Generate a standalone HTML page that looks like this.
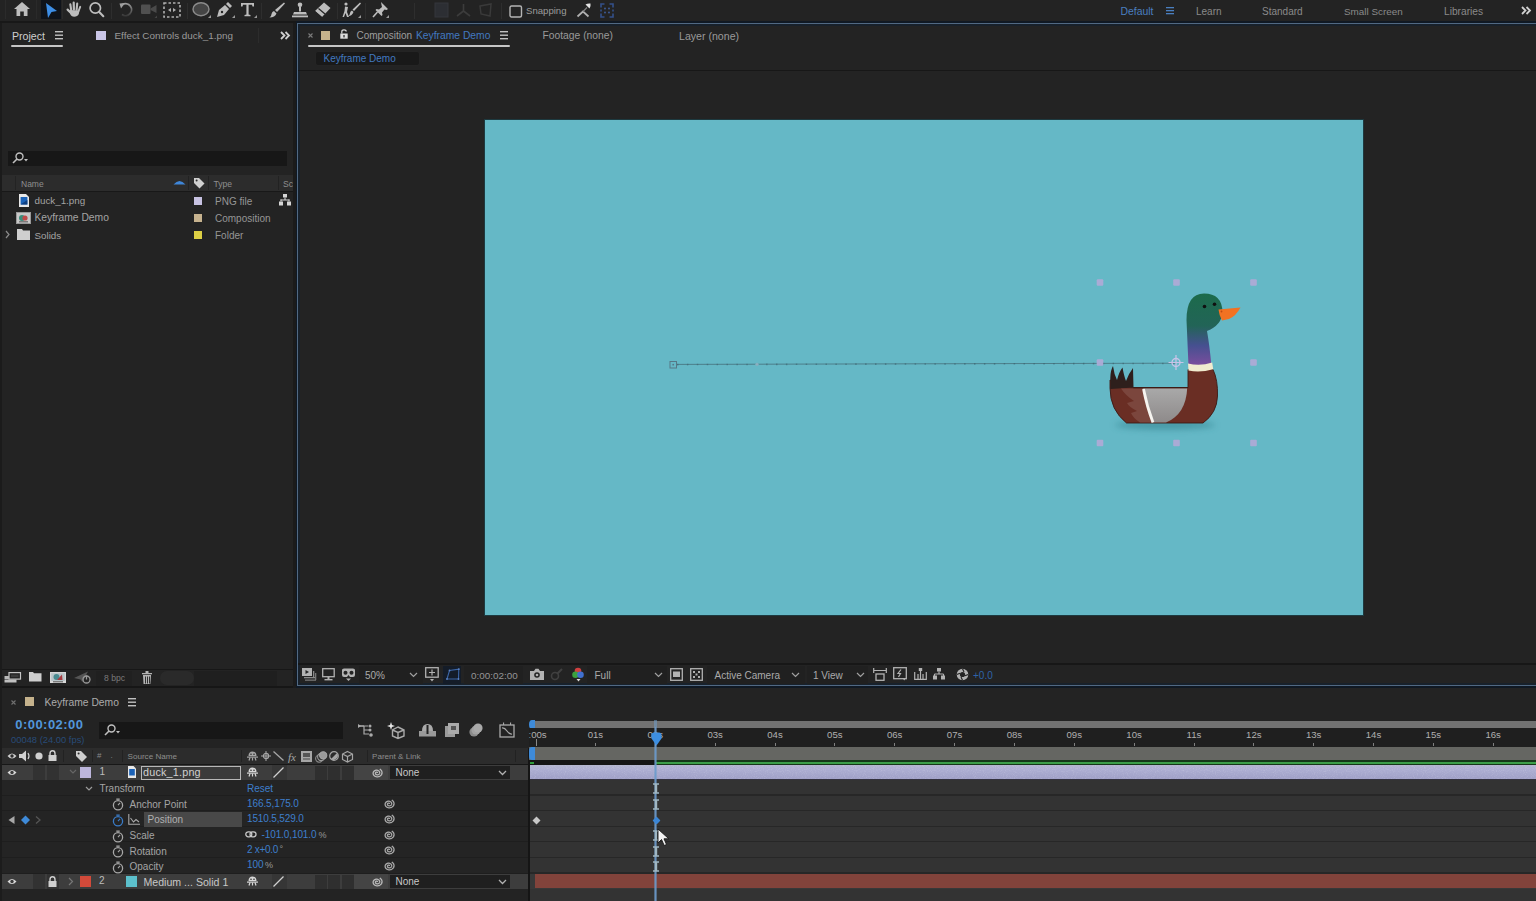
<!DOCTYPE html><html><head><meta charset="utf-8"><style>
html,body{margin:0;padding:0}
body{width:1536px;height:901px;background:#232323;position:relative;overflow:hidden;font-family:"Liberation Sans",sans-serif}
.a{position:absolute}
svg{overflow:visible}
.t{position:absolute;white-space:nowrap;height:14px;line-height:14px}
</style></head><body>
<div class="a" style="left:0px;top:0px;width:1536px;height:22px;background:#232323;"></div>
<div class="a" style="left:0px;top:21px;width:1536px;height:2px;background:#181818;"></div>
<div class="a" style="left:111px;top:3px;width:1px;height:16px;background:#2e2e2e;"></div>
<div class="a" style="left:187px;top:3px;width:1px;height:16px;background:#2e2e2e;"></div>
<div class="a" style="left:261px;top:3px;width:1px;height:16px;background:#2e2e2e;"></div>
<div class="a" style="left:337px;top:3px;width:1px;height:16px;background:#2e2e2e;"></div>
<div class="a" style="left:365px;top:3px;width:1px;height:16px;background:#2e2e2e;"></div>
<div class="a" style="left:414px;top:3px;width:1px;height:16px;background:#2e2e2e;"></div>
<div class="a" style="left:501px;top:3px;width:1px;height:16px;background:#2e2e2e;"></div>
<svg class="a" style="left:14px;top:2px;" width="16" height="14" viewBox="0 0 16 14"><path d="M8 0 L16 7 L13.5 7 L13.5 14 L9.8 14 L9.8 9.5 L6.2 9.5 L6.2 14 L2.5 14 L2.5 7 L0 7 Z" fill="#bdbdbd"/></svg>
<div class="a" style="left:41px;top:0px;width:19.5px;height:19px;background:#0f131a;"></div>
<div class="a" style="left:5px;top:0px;width:1.2px;height:19px;background:#2b2b2b;"></div>
<div class="a" style="left:36px;top:0px;width:1px;height:19px;background:#2a2a2a;"></div>
<div class="a" style="left:61.5px;top:0px;width:1px;height:19px;background:#2a2a2a;"></div>
<svg class="a" style="left:45px;top:3px;" width="13" height="15" viewBox="0 0 13 15"><path d="M1 0 L12 8 L6.5 9 L3 15 Z" fill="#3d8ee6"/></svg>
<svg class="a" style="left:66px;top:1px;" width="16" height="17" viewBox="0 0 16 17"><g stroke="#bdbdbd" stroke-linecap="round" fill="none"><path d="M5.2 9 L4.3 3.2" stroke-width="2.1"/><path d="M7.9 8.5 L7.7 1.6" stroke-width="2.2"/><path d="M10.6 8.8 L11.2 2.6" stroke-width="2.1"/><path d="M12.6 10 L14.2 5.8" stroke-width="1.9"/><path d="M5 12 L1.6 8.6" stroke-width="2.2"/></g><path d="M3.8 9 L13.5 9.5 L12.8 13 Q11.5 15.8 8.2 15.8 Q5.2 15.8 4 12.5 Z" fill="#bdbdbd"/></svg>
<svg class="a" style="left:88px;top:1px;" width="17" height="17" viewBox="0 0 17 17"><circle cx="7.3" cy="7" r="5.2" stroke="#bdbdbd" stroke-width="1.7" fill="none"/><path d="M11 10.8 L15.3 15.2" stroke="#bdbdbd" stroke-width="2.1" stroke-linecap="round"/></svg>
<svg class="a" style="left:118px;top:1px;" width="17" height="16" viewBox="0 0 17 16"><defs><linearGradient id="rg" x1="0" y1="0" x2="0" y2="1"><stop offset="0" stop-color="#9a9a9a"/><stop offset="1" stop-color="#3a3a3a"/></linearGradient></defs><path d="M4.5 3.5 A6 6 0 1 1 4 13.5" stroke="url(#rg)" stroke-width="1.8" fill="none"/><path d="M1.5 2.5 L7 2 L3 7.5 Z" fill="#a0a0a0"/></svg>
<svg class="a" style="left:141px;top:3px;" width="18" height="15" viewBox="0 0 18 15"><rect x="0" y="1.5" width="9.5" height="9.5" rx="1" fill="#505050"/><path d="M9.5 5.5 L15.5 2 L15.5 10 L9.5 7 Z" fill="#4a4a4a"/><path d="M16 15 L16 12.5 L13.5 15Z" fill="#444"/></svg>
<svg class="a" style="left:163px;top:2px;" width="18" height="16" viewBox="0 0 18 16"><rect x="1" y="1" width="16" height="14" stroke="#b0b0b0" stroke-width="1.6" fill="none" stroke-dasharray="2.5 2"/><path d="M5 8 L8 6 L8 10 Z M13 8 L10 6 L10 10 Z" fill="#b0b0b0"/></svg>
<svg class="a" style="left:192px;top:2px;" width="20" height="16" viewBox="0 0 20 16"><ellipse cx="9" cy="7.2" rx="8" ry="6.5" fill="#454545" stroke="#8c8c8c" stroke-width="1.4"/><path d="M19 16 L19 13 L16 16Z" fill="#9a9a9a"/></svg>
<svg class="a" style="left:216px;top:2px;" width="20" height="16" viewBox="0 0 20 16"><path d="M1 15 L3 8 L9 3 L13 7 L8 13 Z" fill="#bdbdbd"/><path d="M10 2 L12 0 L16 4 L14 6 Z" fill="#bdbdbd"/><circle cx="6" cy="10" r="1.2" fill="#232323"/><path d="M19 16 L19 13 L16 16Z" fill="#9a9a9a"/></svg>
<svg class="a" style="left:240px;top:2px;" width="18" height="16" viewBox="0 0 18 16"><path d="M1 1 L14 1 L14 4.5 L12.5 4.5 L12 2.8 L8.6 2.8 L8.6 12.5 L10.5 13 L10.5 14.3 L4.5 14.3 L4.5 13 L6.4 12.5 L6.4 2.8 L3 2.8 L2.5 4.5 L1 4.5 Z" fill="#bdbdbd"/><path d="M17 16 L17 13 L14 16Z" fill="#9a9a9a"/></svg>
<svg class="a" style="left:269px;top:2px;" width="16" height="16" viewBox="0 0 16 16"><path d="M15 0.5 L16 1.5 L8 10 L6 8 Z" fill="#bdbdbd"/><path d="M5 9 L7.5 11.5 Q6 15.5 0.5 15.5 Q2.5 14 2.5 12 Q3 9.5 5 9 Z" fill="#bdbdbd"/></svg>
<svg class="a" style="left:292px;top:2px;" width="16" height="16" viewBox="0 0 16 16"><circle cx="8" cy="2.8" r="2.3" fill="#bdbdbd"/><rect x="7" y="4.5" width="2" height="5" fill="#bdbdbd"/><path d="M2 10 L14 10 L15 12.5 L1 12.5 Z" fill="#bdbdbd"/><rect x="0" y="13.5" width="16" height="1.8" fill="#bdbdbd"/></svg>
<svg class="a" style="left:314px;top:2px;" width="17" height="16" viewBox="0 0 17 16"><path d="M10 0.5 L16.5 6 L8 15 L1 9 Z" fill="#bdbdbd"/><path d="M1 9 L8 15 L5.5 15.5 L0.5 11 Z" fill="#232323"/><path d="M4.5 6.5 L11 12" stroke="#232323" stroke-width="1.2"/></svg>
<svg class="a" style="left:342px;top:2px;" width="20" height="16" viewBox="0 0 20 16"><circle cx="4" cy="2" r="1.6" fill="#bdbdbd"/><path d="M3 4.5 L6 5 L5 10 L7 15 L5 15 L3.5 11 L2 15 L0.5 15 L2.5 9 Z" fill="#bdbdbd"/><path d="M18 0.5 L19 1.5 L12 9 L10.5 7.5 Z" fill="#bdbdbd"/><path d="M10 8.5 L11.5 10 Q10 14 6.5 14 Q8 12.5 8 11 Q8.3 9 10 8.5Z" fill="#bdbdbd"/><path d="M19 16 L19 13 L16 16Z" fill="#9a9a9a"/></svg>
<svg class="a" style="left:372px;top:2px;" width="18" height="16" viewBox="0 0 18 16"><path d="M9 0 L16 7 L14.5 8 L12.5 7.5 L10 10.5 L10.5 13 L9.5 14 L3.5 8 L4.5 7 L7 7.5 L10 5 L9.5 3 Z" fill="#bdbdbd"/><path d="M5.5 10 L1 15" stroke="#bdbdbd" stroke-width="1.6"/><path d="M17 16 L17 13 L14 16Z" fill="#9a9a9a"/></svg>
<svg class="a" style="left:434px;top:2px;" width="15" height="16" viewBox="0 0 15 16"><rect x="1" y="1" width="13" height="14" fill="#2c2e33" stroke="#34363c"/></svg>
<svg class="a" style="left:456px;top:3px;" width="15" height="14" viewBox="0 0 15 14"><path d="M7.5 1 L7.5 8 L1 13 M7.5 8 L14 13" stroke="#3c3c3c" stroke-width="1.6" fill="none"/></svg>
<svg class="a" style="left:479px;top:3px;" width="13" height="14" viewBox="0 0 13 14"><path d="M1 3 L12 1 L11 13 L2 11 Z" stroke="#3a3a3a" stroke-width="1.5" fill="none"/></svg>
<svg class="a" style="left:509px;top:5px;" width="14" height="13" viewBox="0 0 14 13"><rect x="1" y="1" width="11.5" height="11" rx="1.5" stroke="#b4b4b4" stroke-width="1.4" fill="none"/></svg>
<div class="t" style="left:526px;top:4.0px;font-size:9.6px;color:#9c9c9c;">Snapping</div>
<svg class="a" style="left:576px;top:2px;" width="16" height="16" viewBox="0 0 16 16"><path d="M1.5 14.5 L7 9.5 L12.5 14.5" stroke="#b0b0b0" stroke-width="1.7" fill="none"/><path d="M7 9.5 L11 5.5" stroke="#808080" stroke-width="1.3"/><path d="M9.5 2.5 Q12 1 14.5 1.5 Q15 4 13.5 6.5 Z" fill="#e4e4e4"/></svg>
<svg class="a" style="left:600px;top:3px;" width="14" height="15" viewBox="0 0 14 15"><path d="M1 4.5 L1 1 L4.5 1 M9.5 1 L13 1 L13 4.5 M13 10.5 L13 14 L9.5 14 M4.5 14 L1 14 L1 10.5" stroke="#34508a" stroke-width="1.6" fill="none"/><path d="M1 6.5 L1 8.5 M13 6.5 L13 8.5" stroke="#34508a" stroke-width="1.6"/><circle cx="5" cy="5.5" r="0.9" fill="#4060a0"/><circle cx="9" cy="5.5" r="0.9" fill="#4060a0"/><circle cx="5" cy="9.5" r="0.9" fill="#4060a0"/><circle cx="9" cy="9.5" r="0.9" fill="#4060a0"/></svg>
<div class="t" style="left:1120.5px;top:4.7px;font-size:10.4px;color:#4a7fc0;">Default</div>
<svg class="a" style="left:1166px;top:7px;" width="8" height="8" viewBox="0 0 8 8"><rect x="0" y="0" width="8" height="1.3" fill="#4a7fc0"/><rect x="0" y="3" width="8" height="1.3" fill="#4a7fc0"/><rect x="0" y="6" width="8" height="1.3" fill="#4a7fc0"/></svg>
<div class="t" style="left:1196px;top:4.7px;font-size:10px;color:#8a8a8a;">Learn</div>
<div class="t" style="left:1262px;top:4.7px;font-size:10px;color:#8a8a8a;">Standard</div>
<div class="t" style="left:1344px;top:4.7px;font-size:9.9px;color:#8a8a8a;">Small Screen</div>
<div class="t" style="left:1444px;top:4.7px;font-size:10.2px;color:#8a8a8a;">Libraries</div>
<svg class="a" style="left:1521px;top:6px;" width="10" height="10" viewBox="0 0 10 10"><path d="M1 1 L4.5 4.5 L1 8 M5.5 1 L9 4.5 L5.5 8" stroke="#d0d0d0" stroke-width="1.8" fill="none"/></svg>
<div class="a" style="left:0px;top:23px;width:295px;height:665px;background:#232323;"></div>
<div class="a" style="left:0px;top:23px;width:2px;height:665px;background:#1b1b1b;"></div>
<div class="t" style="left:12px;top:28.5px;font-size:10.6px;color:#cfcfcf;">Project</div>
<svg class="a" style="left:55px;top:31px;" width="8" height="9" viewBox="0 0 8 9"><rect x="0" y="0" width="8" height="1.4" fill="#c0c0c0"/><rect x="0" y="3.5" width="8" height="1.4" fill="#c0c0c0"/><rect x="0" y="7" width="8" height="1.4" fill="#c0c0c0"/></svg>
<div class="a" style="left:11px;top:44.5px;width:52px;height:2px;background:#c6c6c6;border-radius:1px"></div>
<div class="a" style="left:96px;top:31px;width:9.5px;height:9px;background:#c9c5e6;"></div>
<div class="t" style="left:114.5px;top:28.5px;font-size:9.9px;color:#9a9a9a;">Effect Controls duck_1.png</div>
<div class="a" style="left:258px;top:28px;width:1px;height:15px;background:#2c2c2c;"></div>
<svg class="a" style="left:280px;top:31px;" width="11" height="10" viewBox="0 0 11 10"><path d="M1 1 L4.5 4.5 L1 8 M5.5 1 L9 4.5 L5.5 8" stroke="#d0d0d0" stroke-width="1.8" fill="none"/></svg>
<div class="a" style="left:8px;top:151px;width:279px;height:15px;background:#171717;"></div>
<svg class="a" style="left:12px;top:152px;" width="18" height="12" viewBox="0 0 18 12"><circle cx="7.5" cy="4.5" r="3.5" stroke="#c0c0c0" stroke-width="1.4" fill="none"/><path d="M5 7 L1 11" stroke="#c0c0c0" stroke-width="1.6"/><path d="M12 7 L16 7 L14 9.5Z" fill="#c0c0c0"/></svg>
<div class="a" style="left:2px;top:175px;width:292px;height:16px;background:#2c2c2c;"></div>
<div class="a" style="left:2px;top:191px;width:292px;height:1px;background:#181818;"></div>
<div class="a" style="left:15px;top:176px;width:1px;height:14px;background:#232323;"></div>
<div class="t" style="left:21px;top:176.8px;font-size:8.5px;color:#8e8e8e;">Name</div>
<svg class="a" style="left:173px;top:179px;" width="13" height="6" viewBox="0 0 13 6"><path d="M0.5 5.5 Q6.5 -1.5 12.5 5.5 Z" fill="#3f86d8"/></svg>
<div class="a" style="left:188px;top:176px;width:1px;height:14px;background:#222;"></div>
<svg class="a" style="left:193px;top:177px;" width="12" height="13" viewBox="0 0 12 13"><path d="M1 1 L6 1 L11.5 6.5 L6.5 11.5 L1 6 Z" fill="#cfcfcf"/><circle cx="3.6" cy="3.6" r="1" fill="#2c2c2c"/></svg>
<div class="a" style="left:208px;top:176px;width:1px;height:14px;background:#222;"></div>
<div class="t" style="left:213.5px;top:177.0px;font-size:8.6px;color:#8e8e8e;">Type</div>
<div class="a" style="left:278px;top:176px;width:1px;height:14px;background:#222;"></div>
<div class="t" style="left:283px;top:177.0px;font-size:8.6px;color:#8e8e8e;">Sc</div>
<div class="t" style="left:34.5px;top:194.0px;font-size:9.8px;color:#a3a3a3;">duck_1.png</div>
<div class="a" style="left:193.5px;top:196.7px;width:8.5px;height:8.3px;background:#c7c2e2;"></div>
<div class="t" style="left:215px;top:194.8px;font-size:10px;color:#969696;">PNG file</div>
<div class="t" style="left:34.5px;top:211.0px;font-size:10.3px;color:#a3a3a3;">Keyframe Demo</div>
<div class="a" style="left:193.5px;top:213.7px;width:8.5px;height:8.3px;background:#c6b28e;"></div>
<div class="t" style="left:215px;top:211.8px;font-size:10px;color:#969696;">Composition</div>
<div class="t" style="left:34.5px;top:228.5px;font-size:9.8px;color:#a3a3a3;">Solids</div>
<div class="a" style="left:193.5px;top:231.2px;width:8.5px;height:8.3px;background:#dccf44;"></div>
<div class="t" style="left:215px;top:229.3px;font-size:10px;color:#969696;">Folder</div>
<svg class="a" style="left:19px;top:194px;" width="10" height="13" viewBox="0 0 10 13"><path d="M0 0 L7 0 L10 3 L10 13 L0 13 Z" fill="#e8e8e8"/><rect x="1.6" y="3" width="6.8" height="7.5" fill="#1a62b8"/><path d="M1.6 10.5 L8.4 6 L8.4 10.5Z" fill="#0f3f80"/></svg>
<svg class="a" style="left:16px;top:212px;" width="15" height="12" viewBox="0 0 15 12"><rect x="0" y="0" width="15" height="12" fill="#9a9a9a"/><rect x="1" y="1" width="13" height="10" fill="#c8c8c8"/><circle cx="6" cy="6" r="3" fill="#3a8c7a"/><circle cx="9" cy="6" r="2.6" fill="#c04848"/><rect x="3" y="9" width="9" height="1.5" fill="#7a7a7a"/></svg>
<svg class="a" style="left:5px;top:230px;" width="5" height="9" viewBox="0 0 5 9"><path d="M1 1 L4 4.5 L1 8" stroke="#8a8a8a" stroke-width="1.2" fill="none"/></svg>
<svg class="a" style="left:17px;top:229px;" width="13" height="11" viewBox="0 0 13 11"><path d="M0 0 L5 0 L6 1.5 L13 1.5 L13 11 L0 11 Z" fill="#cfcfcf"/></svg>
<svg class="a" style="left:279px;top:194px;" width="12" height="12" viewBox="0 0 12 12"><rect x="4" y="0" width="4" height="3.5" fill="#d6d6d6"/><rect x="5.5" y="3.5" width="1" height="2.5" fill="#d6d6d6"/><rect x="1.5" y="5.5" width="9" height="1" fill="#d6d6d6"/><rect x="1.5" y="5.5" width="1" height="2" fill="#d6d6d6"/><rect x="9.5" y="5.5" width="1" height="2" fill="#d6d6d6"/><rect x="0" y="7.5" width="4" height="4" fill="#d6d6d6"/><rect x="8" y="7.5" width="4" height="4" fill="#d6d6d6"/></svg>
<div class="a" style="left:2px;top:669px;width:293px;height:1px;background:#171717;"></div>
<div class="a" style="left:2px;top:670px;width:293px;height:16px;background:#232323;"></div>
<div class="a" style="left:2px;top:686px;width:293px;height:2px;background:#161616;"></div>
<svg class="a" style="left:4px;top:672px;" width="17" height="11" viewBox="0 0 17 11"><rect x="5" y="0.6" width="11.5" height="6.5" fill="none" stroke="#c4c4c4" stroke-width="1.2"/><rect x="7" y="2.6" width="7.5" height="2.5" fill="#3a3a3a"/><rect x="0.5" y="4" width="4.5" height="3" fill="#b8b8b8"/><rect x="0.5" y="7.5" width="12" height="3" fill="#c0c0c0"/></svg>
<svg class="a" style="left:29px;top:672px;" width="13" height="10" viewBox="0 0 13 10"><path d="M0 0 L4 0 L5 1.2 L12.5 1.2 L12.5 9.5 L0 9.5 Z" fill="#cfcfcf"/></svg>
<svg class="a" style="left:50px;top:672px;" width="16" height="11" viewBox="0 0 16 11"><rect x="0" y="0" width="16" height="11" fill="#d8d8d8"/><rect x="1.2" y="1.2" width="13.6" height="7.8" fill="#b8c4c8"/><circle cx="6.5" cy="5" r="3" fill="#4a8a90"/><path d="M7 8 L12 2.5 L12.5 8 Z" fill="#a83a40"/><rect x="3" y="9.3" width="10" height="1" fill="#555"/></svg>
<svg class="a" style="left:74px;top:671px;" width="17" height="13" viewBox="0 0 17 13"><path d="M0 7 L14 0.5 L8.5 11 L6.5 8.5 Z" fill="#555"/><circle cx="12.5" cy="8.5" r="3.5" fill="none" stroke="#9a9a9a" stroke-width="1.3"/><path d="M12.5 4.5 L12.5 8.5" stroke="#9a9a9a" stroke-width="1.3"/></svg>
<div class="a" style="left:96px;top:670.5px;width:36px;height:15px;background:#202020;"></div>
<div class="t" style="left:104px;top:671.0px;font-size:8.6px;color:#7a7a7a;">8 bpc</div>
<svg class="a" style="left:142px;top:671px;" width="10" height="13" viewBox="0 0 10 13"><rect x="0" y="2" width="10" height="1.3" fill="#b4b4b4"/><rect x="3.5" y="0" width="3" height="2" fill="#b4b4b4"/><path d="M1 4 L9 4 L8.4 13 L1.6 13 Z" fill="#b4b4b4"/><path d="M3.5 5.5 L3.5 12.5 M5.5 5.5 L5.5 12.5 M7.5 5.5 L7.5 12.5" stroke="#232323" stroke-width="0.9"/></svg>
<div class="a" style="left:160px;top:671px;width:34px;height:14px;background:#2a2a2a;border-radius:7px"></div>
<div class="a" style="left:194px;top:670.5px;width:83px;height:15px;background:#1f1f1f;"></div>
<div class="a" style="left:293px;top:23px;width:3px;height:665px;background:#1b1b1b;"></div>
<div class="a" style="left:295.5px;top:20.5px;width:1240.5px;height:668px;background:#101924;"></div>
<div class="a" style="left:297px;top:22.8px;width:1239px;height:663.2px;background:#516983;"></div>
<div class="a" style="left:298.2px;top:24.1px;width:1237.8px;height:660.6px;background:#18212b;"></div>
<div class="a" style="left:300px;top:26px;width:1236px;height:657px;background:#232323;"></div>
<svg class="a" style="left:307.5px;top:33px;" width="5" height="5" viewBox="0 0 5 5"><path d="M0.5 0.5 L4.5 4.5 M4.5 0.5 L0.5 4.5" stroke="#7c7c7c" stroke-width="1.1"/></svg>
<div class="a" style="left:320.5px;top:30.5px;width:9.5px;height:9.5px;background:#c5b28c;"></div>
<svg class="a" style="left:340px;top:29px;" width="8" height="10" viewBox="0 0 8 10"><path d="M1.8 4.5 L1.8 2.8 Q1.8 0.8 4 0.8 Q6.2 0.8 6.2 2.4" stroke="#dcdcdc" stroke-width="1.2" fill="none"/><rect x="0.3" y="4.5" width="7.4" height="5.2" fill="#dcdcdc"/><rect x="3.4" y="6" width="1.2" height="2.4" fill="#232323"/></svg>
<div class="t" style="left:356.5px;top:28.5px;font-size:10px;color:#9e9e9e;">Composition</div>
<div class="t" style="left:416px;top:28.5px;font-size:10.3px;color:#4279c0;">Keyframe Demo</div>
<svg class="a" style="left:500px;top:31px;" width="8" height="9" viewBox="0 0 8 9"><rect x="0" y="0" width="8" height="1.4" fill="#c0c0c0"/><rect x="0" y="3.5" width="8" height="1.4" fill="#c0c0c0"/><rect x="0" y="7" width="8" height="1.4" fill="#c0c0c0"/></svg>
<div class="a" style="left:307.5px;top:44.5px;width:202px;height:2px;background:#c6c6c6;border-radius:1px"></div>
<div class="t" style="left:542.5px;top:28.5px;font-size:10.3px;color:#9a9a9a;">Footage (none)</div>
<div class="t" style="left:679px;top:28.5px;font-size:10.6px;color:#9a9a9a;">Layer (none)</div>
<div class="a" style="left:316px;top:51.5px;width:103px;height:13.5px;background:#191919;border-radius:2px;box-shadow:0 0 0 0.6px #262626"></div>
<div class="t" style="left:323.5px;top:51.7px;font-size:10px;color:#4279c0;">Keyframe Demo</div>
<div class="a" style="left:298px;top:69.5px;width:1238px;height:1.5px;background:#171717;"></div>
<div class="a" style="left:484px;top:119px;width:880px;height:496.5px;background:#1d3a40;"></div>
<div class="a" style="left:485px;top:120px;width:878px;height:494.5px;background:#65b8c6;"></div>
<div class="a" style="left:298px;top:663px;width:1238px;height:1.5px;background:#171717;"></div>
<div class="a" style="left:0px;top:688px;width:1536px;height:213px;background:#232323;"></div>
<div class="a" style="left:0px;top:688px;width:2px;height:213px;background:#1c1c1c;"></div>
<svg class="a" style="left:10.5px;top:700px;" width="5" height="5" viewBox="0 0 5 5"><path d="M0.5 0.5 L4.5 4.5 M4.5 0.5 L0.5 4.5" stroke="#707070" stroke-width="1.1"/></svg>
<div class="a" style="left:24.5px;top:696.5px;width:9.5px;height:9.5px;background:#c5b28c;"></div>
<div class="t" style="left:44.5px;top:695.8px;font-size:10.3px;color:#ababab;">Keyframe Demo</div>
<svg class="a" style="left:128px;top:698px;" width="9" height="9" viewBox="0 0 9 9"><rect x="0" y="0" width="8" height="1.4" fill="#c0c0c0"/><rect x="0" y="3.5" width="8" height="1.4" fill="#c0c0c0"/><rect x="0" y="7" width="8" height="1.4" fill="#c0c0c0"/></svg>
<div class="t" style="left:15.3px;top:718.3px;font-size:13px;color:#5296da;font-weight:bold;letter-spacing:0.45px">0:00:02:00</div>
<div class="t" style="left:11px;top:732.8px;font-size:9.4px;color:#284b78;">00048 (24.00 fps)</div>
<div class="a" style="left:99px;top:721.5px;width:244px;height:17px;background:#171717;"></div>
<svg class="a" style="left:104px;top:724px;" width="18" height="12" viewBox="0 0 18 12"><circle cx="7.5" cy="4.5" r="3.5" stroke="#c0c0c0" stroke-width="1.4" fill="none"/><path d="M5 7 L1 11" stroke="#c0c0c0" stroke-width="1.6"/><path d="M12 7 L16 7 L14 9.5Z" fill="#c0c0c0"/></svg>
<div class="a" style="left:2px;top:748px;width:527px;height:16px;background:#2c2c2c;"></div>
<div class="a" style="left:2px;top:764px;width:527px;height:1px;background:#171717;"></div>
<svg class="a" style="left:7px;top:752px;" width="10" height="8" viewBox="0 0 10 8"><path d="M0.5 4 Q5 -1 9.5 4 Q5 9 0.5 4 Z" fill="#cfcfcf"/><circle cx="5" cy="4" r="1.7" fill="#2c2c2c"/></svg>
<svg class="a" style="left:19px;top:750px;" width="12" height="12" viewBox="0 0 12 12"><path d="M0 4 L3 4 L7 0.5 L7 11.5 L3 8 L0 8 Z" fill="#cfcfcf"/><path d="M9 3 Q11 6 9 9" stroke="#cfcfcf" stroke-width="1.2" fill="none"/></svg>
<svg class="a" style="left:35px;top:752px;" width="8" height="8" viewBox="0 0 8 8"><circle cx="4" cy="4" r="3.6" fill="#cfcfcf"/></svg>
<svg class="a" style="left:48px;top:750px;" width="9" height="11" viewBox="0 0 9 11"><path d="M2 5 L2 3.5 Q2 0.8 4.5 0.8 Q7 0.8 7 3.5 L7 5" stroke="#d0d0d0" stroke-width="1.4" fill="none"/><rect x="0.5" y="5" width="8" height="6" fill="#d0d0d0"/></svg>
<div class="a" style="left:63px;top:750px;width:1px;height:12px;background:#222;"></div>
<svg class="a" style="left:75px;top:750px;" width="13" height="13" viewBox="0 0 13 13"><path d="M1 1 L6 1 L12 7 L7 12 L1 6 Z" fill="#cfcfcf"/><circle cx="3.6" cy="3.6" r="1" fill="#2c2c2c"/></svg>
<div class="a" style="left:92px;top:750px;width:1px;height:12px;background:#222;"></div>
<div class="t" style="left:97px;top:749.0px;font-size:8px;color:#8a8a8a;">#</div>
<div class="t" style="left:110.5px;top:749.0px;font-size:8px;color:#8a8a8a;">.</div>
<div class="a" style="left:122px;top:750px;width:1px;height:12px;background:#222;"></div>
<div class="t" style="left:127.5px;top:749.8px;font-size:8.1px;color:#8e8e8e;">Source Name</div>
<div class="a" style="left:241px;top:750px;width:1px;height:12px;background:#222;"></div>
<svg class="a" style="left:247px;top:751px;" width="11" height="10" viewBox="0 0 11 10"><path d="M1.5 5 Q1.5 0.5 5.5 0.5 Q9.5 0.5 9.5 5 Z" fill="#a6a6a6"/><rect x="0" y="5.5" width="11" height="1.2" fill="#a6a6a6"/><path d="M3 6.5 L2 9.5 M8 6.5 L9 9.5 M5.5 6.5 L5.5 9.5" stroke="#a6a6a6" stroke-width="1.2"/><circle cx="4" cy="3.2" r="0.8" fill="#2c2c2c"/><circle cx="7" cy="3.2" r="0.8" fill="#2c2c2c"/></svg>
<svg class="a" style="left:261px;top:751px;" width="10" height="10" viewBox="0 0 10 10"><circle cx="5" cy="5" r="2.6" stroke="#a6a6a6" stroke-width="1.2" fill="none"/><path d="M5 0 L5 10 M0 5 L10 5" stroke="#a6a6a6" stroke-width="1"/></svg>
<svg class="a" style="left:273px;top:751px;" width="11" height="10" viewBox="0 0 11 10"><path d="M0.5 0.5 L10.5 9.5" stroke="#a6a6a6" stroke-width="1.3"/></svg>
<div class="t" style="left:288px;top:749.5px;font-size:11px;color:#a6a6a6;font-family:'Liberation Serif',serif"><i>fx</i></div>
<svg class="a" style="left:300.5px;top:750.5px;" width="11" height="11" viewBox="0 0 11 11"><rect x="0" y="0" width="11" height="11" fill="#a6a6a6"/><rect x="2" y="2" width="7" height="4" fill="#555"/><rect x="2" y="7" width="7" height="2" fill="#777"/></svg>
<svg class="a" style="left:314.5px;top:750.5px;" width="12" height="12" viewBox="0 0 12 12"><circle cx="4.2" cy="7.6" r="3.6" fill="#2c2c2c" stroke="#8a8a8a" stroke-width="1.1"/><circle cx="6.2" cy="6" r="3.6" fill="#2c2c2c" stroke="#9a9a9a" stroke-width="1.1"/><circle cx="8.2" cy="4.4" r="3.6" fill="#9a9a9a" stroke="#a6a6a6" stroke-width="1.1"/></svg>
<svg class="a" style="left:329px;top:751px;" width="10" height="10" viewBox="0 0 10 10"><circle cx="5" cy="5" r="4.3" fill="#2c2c2c" stroke="#a6a6a6" stroke-width="1.2"/><path d="M8 2 A4.3 4.3 0 0 1 2 8 Z" fill="#a6a6a6"/></svg>
<svg class="a" style="left:342px;top:750.5px;" width="11" height="11" viewBox="0 0 11 11"><path d="M5.5 0.5 L10.5 3 L10.5 8.5 L5.5 11 L0.5 8.5 L0.5 3 Z M0.5 3 L5.5 5.5 L10.5 3 M5.5 5.5 L5.5 11" stroke="#a6a6a6" stroke-width="1.2" fill="none"/></svg>
<div class="a" style="left:367px;top:750px;width:1px;height:12px;background:#222;"></div>
<div class="t" style="left:372px;top:750.0px;font-size:8.1px;color:#8e8e8e;">Parent &amp; Link</div>
<div class="a" style="left:514.5px;top:750px;width:1px;height:12px;background:#222;"></div>
<svg class="a" style="left:358px;top:723px;" width="17" height="15" viewBox="0 0 17 15"><path d="M0 3 L6 3" stroke="#aaaaaa" stroke-width="1.6"/><path d="M0 1 L3 3 L0 5Z" fill="#aaaaaa"/><path d="M6 3 L6 11 L11 11 M6 7 L11 7 M6 3 L10 3" stroke="#aaaaaa" stroke-width="1.2" fill="none"/><circle cx="12" cy="3" r="1.5" fill="#aaaaaa"/><circle cx="12" cy="7" r="1.5" fill="#aaaaaa"/><circle cx="13" cy="12" r="1.8" fill="#aaaaaa"/></svg>
<svg class="a" style="left:388px;top:722px;" width="17" height="16" viewBox="0 0 17 16"><path d="M3 0 L4 3 L7 4 L4 5 L3 8 L2 5 L-1 4 L2 3 Z" fill="#e8e8e8"/><path d="M10 5 L16 8 L16 14 L10 16.5 L4.5 14 L4.5 8 Z M4.5 8 L10 10.5 L16 8 M10 10.5 L10 16.5" stroke="#aaaaaa" stroke-width="1.4" fill="none"/></svg>
<svg class="a" style="left:419px;top:723px;" width="17" height="14" viewBox="0 0 17 14"><path d="M3 8 Q3 1 8.5 1 Q14 1 14 8 Z" fill="#aaaaaa"/><rect x="0" y="8" width="17" height="5.5" fill="#9a9a9a"/><rect x="7.5" y="2" width="2" height="9" fill="#232323"/></svg>
<svg class="a" style="left:445px;top:723px;" width="14" height="14" viewBox="0 0 14 14"><rect x="0" y="3" width="10" height="11" fill="#9a9a9a"/><rect x="3" y="0" width="11" height="11" fill="#aaaaaa"/><rect x="6" y="3" width="5" height="4" fill="#555"/></svg>
<svg class="a" style="left:469px;top:723px;" width="14" height="14" viewBox="0 0 14 14"><circle cx="5" cy="9" r="4.6" fill="#8a8a8a"/><circle cx="7" cy="7" r="4.6" fill="#a2a2a2"/><circle cx="9" cy="5" r="4.6" fill="#aaaaaa"/></svg>
<svg class="a" style="left:499px;top:722px;" width="16" height="16" viewBox="0 0 16 16"><rect x="1" y="3" width="14" height="12" stroke="#aaaaaa" stroke-width="1.3" fill="none"/><path d="M3 6 Q5.5 5.5 8 9 Q10.5 12.5 13 12" stroke="#aaaaaa" stroke-width="1.2" fill="none"/><rect x="4" y="0.5" width="1.1" height="2.5" fill="#aaaaaa"/><rect x="11" y="0.5" width="1.1" height="2.5" fill="#aaaaaa"/></svg>
<div class="a" style="left:2px;top:765px;width:527px;height:15px;background:#3d3d3d;"></div>
<div class="a" style="left:354px;top:765px;width:34px;height:15px;background:#444444;"></div>
<div class="a" style="left:272px;top:765px;width:15px;height:15px;background:#363636;"></div>
<div class="a" style="left:33px;top:765px;width:12px;height:15px;background:#323232;"></div>
<div class="a" style="left:46.5px;top:765px;width:12px;height:15px;background:#323232;"></div>
<svg class="a" style="left:7px;top:768.5px;" width="10" height="7" viewBox="0 0 10 7"><path d="M0.5 3.5 Q5 -1.5 9.5 3.5 Q5 8.5 0.5 3.5 Z" fill="#d8d8d8"/><circle cx="5" cy="3.5" r="1.7" fill="#3b3b3b"/></svg>
<svg class="a" style="left:69px;top:769px;" width="8" height="6" viewBox="0 0 8 6"><path d="M1 1 L4 4 L7 1" stroke="#666" stroke-width="1.2" fill="none"/></svg>
<div class="a" style="left:80px;top:767px;width:10.5px;height:11px;background:#bdb6dc;"></div>
<div class="t" style="left:99.5px;top:765.0px;font-size:10px;color:#bcbcbc;">1</div>
<svg class="a" style="left:128px;top:766px;" width="8" height="12" viewBox="0 0 8 12"><path d="M0 0 L5.5 0 L8 2.5 L8 12 L0 12 Z" fill="#e8e8e8"/><rect x="1.2" y="3" width="5.6" height="6.5" fill="#1a62b8"/></svg>
<div class="a" style="left:140.5px;top:765.5px;width:100.5px;height:14px;background:#3b3b3b;box-sizing:border-box;border:1.2px solid #b8b8b8"></div>
<div class="t" style="left:143px;top:765.0px;font-size:10.8px;color:#d0d0d0;letter-spacing:0.2px">duck_1.png</div>
<svg class="a" style="left:247px;top:767px;" width="11" height="10" viewBox="0 0 11 10"><path d="M1.5 5 Q1.5 0.5 5.5 0.5 Q9.5 0.5 9.5 5 Z" fill="#d8d8d8"/><rect x="0" y="5.5" width="11" height="1.2" fill="#d8d8d8"/><path d="M3 6.5 L2 9.5 M8 6.5 L9 9.5 M5.5 6.5 L5.5 9.5" stroke="#d8d8d8" stroke-width="1.2"/><circle cx="4" cy="3.2" r="0.8" fill="#2c2c2c"/><circle cx="7" cy="3.2" r="0.8" fill="#2c2c2c"/></svg>
<svg class="a" style="left:273px;top:767px;" width="11" height="11" viewBox="0 0 11 11"><path d="M0.5 10.5 L10.5 0.5" stroke="#d0d0d0" stroke-width="1.3"/></svg>
<div class="a" style="left:314.7px;top:765.5px;width:12px;height:14px;background:#2f2f2f;"></div>
<div class="a" style="left:328px;top:765.5px;width:12px;height:14px;background:#2f2f2f;"></div>
<div class="a" style="left:342.3px;top:765.5px;width:12px;height:14px;background:#2f2f2f;"></div>
<svg class="a" style="left:371px;top:766.5px;" width="12" height="12" viewBox="0 0 12 12"><path d="M6.47 5.83 L6.48 5.73 L6.47 5.63 L6.43 5.53 L6.37 5.43 L6.27 5.34 L6.15 5.26 L6.01 5.19 L5.84 5.15 L5.66 5.14 L5.47 5.15 L5.28 5.19 L5.09 5.27 L4.91 5.38 L4.75 5.52 L4.62 5.69 L4.51 5.88 L4.45 6.09 L4.43 6.32 L4.46 6.56 L4.53 6.80 L4.66 7.03 L4.84 7.24 L5.06 7.43 L5.33 7.59 L5.63 7.72 L5.97 7.80 L6.32 7.83 L6.69 7.81 L7.05 7.74 L7.41 7.61 L7.74 7.42 L8.04 7.19 L8.30 6.91 L8.50 6.58 L8.64 6.23 L8.71 5.85 L8.71 5.46 L8.62 5.07 L8.46 4.69 L8.22 4.33 L7.91 4.00 L7.53 3.71 L7.09 3.48 L6.60 3.31 L6.08 3.21 L5.53 3.18 L4.98 3.24 L4.43 3.37 L3.91 3.59 L3.43 3.88 L3.01 4.23 L2.66 4.66 L2.38 5.13 L2.21 5.64 L2.13 6.18 L2.16 6.73 L2.29 7.28 L2.54 7.81 L2.89 8.31 L3.33 8.75 L3.87 9.14 L4.48 9.44 L5.15 9.66 L5.86 9.78 L6.60 9.80 L7.34 9.72 L8.06 9.53 L8.75 9.23 L9.37 8.84 L9.92 8.36 L10.38 7.80 L10.72 7.17 L10.94 6.50 L11.04 5.80 L10.99 5.08 L10.80 4.38 L10.48 3.70 L10.02 3.07 L9.44 2.50 L8.75 2.02" stroke="#b8b8b8" stroke-width="1.3" fill="none"/></svg>
<div class="a" style="left:389.5px;top:766px;width:120px;height:13px;background:#1f1f1f;"></div>
<div class="t" style="left:395.5px;top:765.5px;font-size:10px;color:#c8c8c8;">None</div>
<svg class="a" style="left:498px;top:770px;" width="9" height="6" viewBox="0 0 9 6"><path d="M1 1 L4.5 4.5 L8 1" stroke="#b0b0b0" stroke-width="1.3" fill="none"/></svg>
<div class="a" style="left:2px;top:780.0px;width:527px;height:15.6px;background:#242424;"></div>
<div class="a" style="left:2px;top:794.6px;width:527px;height:1px;background:#1e1e1e;"></div>
<div class="a" style="left:2px;top:795.6px;width:527px;height:15.6px;background:#242424;"></div>
<div class="a" style="left:2px;top:810.2px;width:527px;height:1px;background:#1e1e1e;"></div>
<div class="a" style="left:2px;top:811.2px;width:527px;height:15.6px;background:#242424;"></div>
<div class="a" style="left:2px;top:825.8000000000001px;width:527px;height:1px;background:#1e1e1e;"></div>
<div class="a" style="left:2px;top:826.8px;width:527px;height:15.6px;background:#242424;"></div>
<div class="a" style="left:2px;top:841.4px;width:527px;height:1px;background:#1e1e1e;"></div>
<div class="a" style="left:2px;top:842.4px;width:527px;height:15.6px;background:#242424;"></div>
<div class="a" style="left:2px;top:857.0px;width:527px;height:1px;background:#1e1e1e;"></div>
<div class="a" style="left:2px;top:858.0px;width:527px;height:15.6px;background:#242424;"></div>
<div class="a" style="left:2px;top:872.6px;width:527px;height:1px;background:#1e1e1e;"></div>
<div class="a" style="left:143.5px;top:811.5px;width:98.5px;height:15.5px;background:#484848;"></div>
<svg class="a" style="left:85px;top:786px;" width="8" height="6" viewBox="0 0 8 6"><path d="M1 1 L4 4 L7 1" stroke="#9a9a9a" stroke-width="1.2" fill="none"/></svg>
<div class="t" style="left:99.5px;top:781.5px;font-size:10px;color:#a4a4a4;">Transform</div>
<svg class="a" style="left:111.5px;top:798px;" width="12" height="13" viewBox="0 0 12 13"><circle cx="6" cy="7.2" r="4.6" stroke="#a8a8a8" stroke-width="1.3" fill="none"/><rect x="4.3" y="0.5" width="3.4" height="1.3" fill="#a8a8a8"/><path d="M6 7.2 L8 4.8" stroke="#a8a8a8" stroke-width="1.1"/></svg>
<div class="t" style="left:129.5px;top:797.8px;font-size:10px;color:#a4a4a4">Anchor Point</div>
<svg class="a" style="left:111.5px;top:813.5px;" width="12" height="13" viewBox="0 0 12 13"><circle cx="6" cy="7.2" r="4.6" stroke="#3a7cc8" stroke-width="1.3" fill="none"/><rect x="4.3" y="0.5" width="3.4" height="1.3" fill="#3a7cc8"/><path d="M6 7.2 L8 4.8" stroke="#3a7cc8" stroke-width="1.1"/></svg>
<div class="t" style="left:147.5px;top:813.3px;font-size:10px;color:#b0b0b0">Position</div>
<svg class="a" style="left:111.5px;top:829.5px;" width="12" height="13" viewBox="0 0 12 13"><circle cx="6" cy="7.2" r="4.6" stroke="#a8a8a8" stroke-width="1.3" fill="none"/><rect x="4.3" y="0.5" width="3.4" height="1.3" fill="#a8a8a8"/><path d="M6 7.2 L8 4.8" stroke="#a8a8a8" stroke-width="1.1"/></svg>
<div class="t" style="left:129.5px;top:829.3px;font-size:10px;color:#a4a4a4">Scale</div>
<svg class="a" style="left:111.5px;top:845px;" width="12" height="13" viewBox="0 0 12 13"><circle cx="6" cy="7.2" r="4.6" stroke="#a8a8a8" stroke-width="1.3" fill="none"/><rect x="4.3" y="0.5" width="3.4" height="1.3" fill="#a8a8a8"/><path d="M6 7.2 L8 4.8" stroke="#a8a8a8" stroke-width="1.1"/></svg>
<div class="t" style="left:129.5px;top:844.8px;font-size:10px;color:#a4a4a4">Rotation</div>
<svg class="a" style="left:111.5px;top:860.5px;" width="12" height="13" viewBox="0 0 12 13"><circle cx="6" cy="7.2" r="4.6" stroke="#a8a8a8" stroke-width="1.3" fill="none"/><rect x="4.3" y="0.5" width="3.4" height="1.3" fill="#a8a8a8"/><path d="M6 7.2 L8 4.8" stroke="#a8a8a8" stroke-width="1.1"/></svg>
<div class="t" style="left:129.5px;top:860.3px;font-size:10px;color:#a4a4a4">Opacity</div>
<svg class="a" style="left:128px;top:814px;" width="12" height="11" viewBox="0 0 12 11"><path d="M0.8 0 L0.8 10.2 L12 10.2" stroke="#a8a8a8" stroke-width="1.1" fill="none"/><path d="M2.5 4 L5.5 8 L8 5.5 L11 8" stroke="#a8a8a8" stroke-width="1.1" fill="none"/></svg>
<svg class="a" style="left:7px;top:815px;" width="35" height="10" viewBox="0 0 35 10"><path d="M7.5 1 L7.5 9 L1.5 5 Z" fill="#a8a8a8"/><path d="M18.5 0.5 L23 5 L18.5 9.5 L14 5 Z" fill="#3e8ad8"/><path d="M29 1.5 L33 5 L29 8.5" stroke="#555" stroke-width="1.3" fill="none"/></svg>
<div class="t" style="left:247px;top:781.7px;font-size:10px;color:#3e7fcc;">Reset</div>
<div class="t" style="left:247px;top:796.5px;font-size:10px;color:#3e7fcc;letter-spacing:-0.1px">166.5,175.0</div>
<div class="t" style="left:247px;top:811.7px;font-size:10px;color:#3e7fcc;letter-spacing:-0.15px">1510.5,529.0</div>
<svg class="a" style="left:245px;top:831px;" width="12" height="7" viewBox="0 0 12 7"><rect x="0.8" y="0.8" width="6" height="5" rx="2.5" stroke="#c8c8c8" stroke-width="1.3" fill="none"/><rect x="5" y="0.8" width="6" height="5" rx="2.5" stroke="#c8c8c8" stroke-width="1.3" fill="none"/></svg>
<div class="t" style="left:261.5px;top:827.5px;font-size:10px;color:#3e7fcc;letter-spacing:-0.1px">-101.0,101.0</div>
<div class="t" style="left:318.5px;top:827.5px;font-size:9px;color:#9a9a9a;">%</div>
<div class="t" style="left:247px;top:842.8px;font-size:10px;color:#3e7fcc;letter-spacing:-0.3px">2 x+0.0</div>
<div class="t" style="left:279.5px;top:842.0px;font-size:9px;color:#9a9a9a;">°</div>
<div class="t" style="left:247px;top:858.0px;font-size:10px;color:#3e7fcc;">100</div>
<div class="t" style="left:265px;top:858.0px;font-size:9px;color:#9a9a9a;">%</div>
<svg class="a" style="left:383px;top:797.5px;" width="12" height="12" viewBox="0 0 12 12"><path d="M6.47 5.83 L6.48 5.73 L6.47 5.63 L6.43 5.53 L6.37 5.43 L6.27 5.34 L6.15 5.26 L6.01 5.19 L5.84 5.15 L5.66 5.14 L5.47 5.15 L5.28 5.19 L5.09 5.27 L4.91 5.38 L4.75 5.52 L4.62 5.69 L4.51 5.88 L4.45 6.09 L4.43 6.32 L4.46 6.56 L4.53 6.80 L4.66 7.03 L4.84 7.24 L5.06 7.43 L5.33 7.59 L5.63 7.72 L5.97 7.80 L6.32 7.83 L6.69 7.81 L7.05 7.74 L7.41 7.61 L7.74 7.42 L8.04 7.19 L8.30 6.91 L8.50 6.58 L8.64 6.23 L8.71 5.85 L8.71 5.46 L8.62 5.07 L8.46 4.69 L8.22 4.33 L7.91 4.00 L7.53 3.71 L7.09 3.48 L6.60 3.31 L6.08 3.21 L5.53 3.18 L4.98 3.24 L4.43 3.37 L3.91 3.59 L3.43 3.88 L3.01 4.23 L2.66 4.66 L2.38 5.13 L2.21 5.64 L2.13 6.18 L2.16 6.73 L2.29 7.28 L2.54 7.81 L2.89 8.31 L3.33 8.75 L3.87 9.14 L4.48 9.44 L5.15 9.66 L5.86 9.78 L6.60 9.80 L7.34 9.72 L8.06 9.53 L8.75 9.23 L9.37 8.84 L9.92 8.36 L10.38 7.80 L10.72 7.17 L10.94 6.50 L11.04 5.80 L10.99 5.08 L10.80 4.38 L10.48 3.70 L10.02 3.07 L9.44 2.50 L8.75 2.02" stroke="#a8a8a8" stroke-width="1.3" fill="none"/></svg>
<svg class="a" style="left:383px;top:813px;" width="12" height="12" viewBox="0 0 12 12"><path d="M6.47 5.83 L6.48 5.73 L6.47 5.63 L6.43 5.53 L6.37 5.43 L6.27 5.34 L6.15 5.26 L6.01 5.19 L5.84 5.15 L5.66 5.14 L5.47 5.15 L5.28 5.19 L5.09 5.27 L4.91 5.38 L4.75 5.52 L4.62 5.69 L4.51 5.88 L4.45 6.09 L4.43 6.32 L4.46 6.56 L4.53 6.80 L4.66 7.03 L4.84 7.24 L5.06 7.43 L5.33 7.59 L5.63 7.72 L5.97 7.80 L6.32 7.83 L6.69 7.81 L7.05 7.74 L7.41 7.61 L7.74 7.42 L8.04 7.19 L8.30 6.91 L8.50 6.58 L8.64 6.23 L8.71 5.85 L8.71 5.46 L8.62 5.07 L8.46 4.69 L8.22 4.33 L7.91 4.00 L7.53 3.71 L7.09 3.48 L6.60 3.31 L6.08 3.21 L5.53 3.18 L4.98 3.24 L4.43 3.37 L3.91 3.59 L3.43 3.88 L3.01 4.23 L2.66 4.66 L2.38 5.13 L2.21 5.64 L2.13 6.18 L2.16 6.73 L2.29 7.28 L2.54 7.81 L2.89 8.31 L3.33 8.75 L3.87 9.14 L4.48 9.44 L5.15 9.66 L5.86 9.78 L6.60 9.80 L7.34 9.72 L8.06 9.53 L8.75 9.23 L9.37 8.84 L9.92 8.36 L10.38 7.80 L10.72 7.17 L10.94 6.50 L11.04 5.80 L10.99 5.08 L10.80 4.38 L10.48 3.70 L10.02 3.07 L9.44 2.50 L8.75 2.02" stroke="#a8a8a8" stroke-width="1.3" fill="none"/></svg>
<svg class="a" style="left:383px;top:828.5px;" width="12" height="12" viewBox="0 0 12 12"><path d="M6.47 5.83 L6.48 5.73 L6.47 5.63 L6.43 5.53 L6.37 5.43 L6.27 5.34 L6.15 5.26 L6.01 5.19 L5.84 5.15 L5.66 5.14 L5.47 5.15 L5.28 5.19 L5.09 5.27 L4.91 5.38 L4.75 5.52 L4.62 5.69 L4.51 5.88 L4.45 6.09 L4.43 6.32 L4.46 6.56 L4.53 6.80 L4.66 7.03 L4.84 7.24 L5.06 7.43 L5.33 7.59 L5.63 7.72 L5.97 7.80 L6.32 7.83 L6.69 7.81 L7.05 7.74 L7.41 7.61 L7.74 7.42 L8.04 7.19 L8.30 6.91 L8.50 6.58 L8.64 6.23 L8.71 5.85 L8.71 5.46 L8.62 5.07 L8.46 4.69 L8.22 4.33 L7.91 4.00 L7.53 3.71 L7.09 3.48 L6.60 3.31 L6.08 3.21 L5.53 3.18 L4.98 3.24 L4.43 3.37 L3.91 3.59 L3.43 3.88 L3.01 4.23 L2.66 4.66 L2.38 5.13 L2.21 5.64 L2.13 6.18 L2.16 6.73 L2.29 7.28 L2.54 7.81 L2.89 8.31 L3.33 8.75 L3.87 9.14 L4.48 9.44 L5.15 9.66 L5.86 9.78 L6.60 9.80 L7.34 9.72 L8.06 9.53 L8.75 9.23 L9.37 8.84 L9.92 8.36 L10.38 7.80 L10.72 7.17 L10.94 6.50 L11.04 5.80 L10.99 5.08 L10.80 4.38 L10.48 3.70 L10.02 3.07 L9.44 2.50 L8.75 2.02" stroke="#a8a8a8" stroke-width="1.3" fill="none"/></svg>
<svg class="a" style="left:383px;top:844px;" width="12" height="12" viewBox="0 0 12 12"><path d="M6.47 5.83 L6.48 5.73 L6.47 5.63 L6.43 5.53 L6.37 5.43 L6.27 5.34 L6.15 5.26 L6.01 5.19 L5.84 5.15 L5.66 5.14 L5.47 5.15 L5.28 5.19 L5.09 5.27 L4.91 5.38 L4.75 5.52 L4.62 5.69 L4.51 5.88 L4.45 6.09 L4.43 6.32 L4.46 6.56 L4.53 6.80 L4.66 7.03 L4.84 7.24 L5.06 7.43 L5.33 7.59 L5.63 7.72 L5.97 7.80 L6.32 7.83 L6.69 7.81 L7.05 7.74 L7.41 7.61 L7.74 7.42 L8.04 7.19 L8.30 6.91 L8.50 6.58 L8.64 6.23 L8.71 5.85 L8.71 5.46 L8.62 5.07 L8.46 4.69 L8.22 4.33 L7.91 4.00 L7.53 3.71 L7.09 3.48 L6.60 3.31 L6.08 3.21 L5.53 3.18 L4.98 3.24 L4.43 3.37 L3.91 3.59 L3.43 3.88 L3.01 4.23 L2.66 4.66 L2.38 5.13 L2.21 5.64 L2.13 6.18 L2.16 6.73 L2.29 7.28 L2.54 7.81 L2.89 8.31 L3.33 8.75 L3.87 9.14 L4.48 9.44 L5.15 9.66 L5.86 9.78 L6.60 9.80 L7.34 9.72 L8.06 9.53 L8.75 9.23 L9.37 8.84 L9.92 8.36 L10.38 7.80 L10.72 7.17 L10.94 6.50 L11.04 5.80 L10.99 5.08 L10.80 4.38 L10.48 3.70 L10.02 3.07 L9.44 2.50 L8.75 2.02" stroke="#a8a8a8" stroke-width="1.3" fill="none"/></svg>
<svg class="a" style="left:383px;top:859.5px;" width="12" height="12" viewBox="0 0 12 12"><path d="M6.47 5.83 L6.48 5.73 L6.47 5.63 L6.43 5.53 L6.37 5.43 L6.27 5.34 L6.15 5.26 L6.01 5.19 L5.84 5.15 L5.66 5.14 L5.47 5.15 L5.28 5.19 L5.09 5.27 L4.91 5.38 L4.75 5.52 L4.62 5.69 L4.51 5.88 L4.45 6.09 L4.43 6.32 L4.46 6.56 L4.53 6.80 L4.66 7.03 L4.84 7.24 L5.06 7.43 L5.33 7.59 L5.63 7.72 L5.97 7.80 L6.32 7.83 L6.69 7.81 L7.05 7.74 L7.41 7.61 L7.74 7.42 L8.04 7.19 L8.30 6.91 L8.50 6.58 L8.64 6.23 L8.71 5.85 L8.71 5.46 L8.62 5.07 L8.46 4.69 L8.22 4.33 L7.91 4.00 L7.53 3.71 L7.09 3.48 L6.60 3.31 L6.08 3.21 L5.53 3.18 L4.98 3.24 L4.43 3.37 L3.91 3.59 L3.43 3.88 L3.01 4.23 L2.66 4.66 L2.38 5.13 L2.21 5.64 L2.13 6.18 L2.16 6.73 L2.29 7.28 L2.54 7.81 L2.89 8.31 L3.33 8.75 L3.87 9.14 L4.48 9.44 L5.15 9.66 L5.86 9.78 L6.60 9.80 L7.34 9.72 L8.06 9.53 L8.75 9.23 L9.37 8.84 L9.92 8.36 L10.38 7.80 L10.72 7.17 L10.94 6.50 L11.04 5.80 L10.99 5.08 L10.80 4.38 L10.48 3.70 L10.02 3.07 L9.44 2.50 L8.75 2.02" stroke="#a8a8a8" stroke-width="1.3" fill="none"/></svg>
<div class="a" style="left:2px;top:874px;width:527px;height:15px;background:#3d3d3d;"></div>
<div class="a" style="left:354px;top:874px;width:34px;height:15px;background:#444444;"></div>
<div class="a" style="left:272px;top:874px;width:15px;height:15px;background:#363636;"></div>
<div class="a" style="left:33px;top:874px;width:12px;height:15px;background:#323232;"></div>
<div class="a" style="left:46.5px;top:874px;width:12px;height:15px;background:#323232;"></div>
<svg class="a" style="left:7px;top:877.5px;" width="10" height="7" viewBox="0 0 10 7"><path d="M0.5 3.5 Q5 -1.5 9.5 3.5 Q5 8.5 0.5 3.5 Z" fill="#d8d8d8"/><circle cx="5" cy="3.5" r="1.7" fill="#3b3b3b"/></svg>
<svg class="a" style="left:48px;top:875.5px;" width="9" height="11" viewBox="0 0 9 11"><path d="M2 5 L2 3.5 Q2 0.8 4.5 0.8 Q7 0.8 7 3.5 L7 5" stroke="#d0d0d0" stroke-width="1.4" fill="none"/><rect x="0.5" y="5" width="8" height="6" fill="#d0d0d0"/></svg>
<svg class="a" style="left:68px;top:877px;" width="6" height="9" viewBox="0 0 6 9"><path d="M1 1 L4.5 4.5 L1 8" stroke="#777" stroke-width="1.2" fill="none"/></svg>
<div class="a" style="left:80px;top:876px;width:10.5px;height:11px;background:#d24a3a;"></div>
<div class="t" style="left:99px;top:874.0px;font-size:10px;color:#bcbcbc;">2</div>
<div class="a" style="left:126px;top:875.5px;width:11px;height:11px;background:#5cc0cc;"></div>
<div class="t" style="left:143.5px;top:874.5px;font-size:10.6px;color:#c8c8c8;">Medium ... Solid 1</div>
<svg class="a" style="left:247px;top:876px;" width="11" height="10" viewBox="0 0 11 10"><path d="M1.5 5 Q1.5 0.5 5.5 0.5 Q9.5 0.5 9.5 5 Z" fill="#d8d8d8"/><rect x="0" y="5.5" width="11" height="1.2" fill="#d8d8d8"/><path d="M3 6.5 L2 9.5 M8 6.5 L9 9.5 M5.5 6.5 L5.5 9.5" stroke="#d8d8d8" stroke-width="1.2"/><circle cx="4" cy="3.2" r="0.8" fill="#2c2c2c"/><circle cx="7" cy="3.2" r="0.8" fill="#2c2c2c"/></svg>
<svg class="a" style="left:273px;top:876px;" width="11" height="11" viewBox="0 0 11 11"><path d="M0.5 10.5 L10.5 0.5" stroke="#d0d0d0" stroke-width="1.3"/></svg>
<div class="a" style="left:314.7px;top:874.5px;width:12px;height:14px;background:#2f2f2f;"></div>
<div class="a" style="left:328px;top:874.5px;width:12px;height:14px;background:#2f2f2f;"></div>
<div class="a" style="left:342.3px;top:874.5px;width:12px;height:14px;background:#2f2f2f;"></div>
<svg class="a" style="left:371px;top:875.5px;" width="12" height="12" viewBox="0 0 12 12"><path d="M6.47 5.83 L6.48 5.73 L6.47 5.63 L6.43 5.53 L6.37 5.43 L6.27 5.34 L6.15 5.26 L6.01 5.19 L5.84 5.15 L5.66 5.14 L5.47 5.15 L5.28 5.19 L5.09 5.27 L4.91 5.38 L4.75 5.52 L4.62 5.69 L4.51 5.88 L4.45 6.09 L4.43 6.32 L4.46 6.56 L4.53 6.80 L4.66 7.03 L4.84 7.24 L5.06 7.43 L5.33 7.59 L5.63 7.72 L5.97 7.80 L6.32 7.83 L6.69 7.81 L7.05 7.74 L7.41 7.61 L7.74 7.42 L8.04 7.19 L8.30 6.91 L8.50 6.58 L8.64 6.23 L8.71 5.85 L8.71 5.46 L8.62 5.07 L8.46 4.69 L8.22 4.33 L7.91 4.00 L7.53 3.71 L7.09 3.48 L6.60 3.31 L6.08 3.21 L5.53 3.18 L4.98 3.24 L4.43 3.37 L3.91 3.59 L3.43 3.88 L3.01 4.23 L2.66 4.66 L2.38 5.13 L2.21 5.64 L2.13 6.18 L2.16 6.73 L2.29 7.28 L2.54 7.81 L2.89 8.31 L3.33 8.75 L3.87 9.14 L4.48 9.44 L5.15 9.66 L5.86 9.78 L6.60 9.80 L7.34 9.72 L8.06 9.53 L8.75 9.23 L9.37 8.84 L9.92 8.36 L10.38 7.80 L10.72 7.17 L10.94 6.50 L11.04 5.80 L10.99 5.08 L10.80 4.38 L10.48 3.70 L10.02 3.07 L9.44 2.50 L8.75 2.02" stroke="#b8b8b8" stroke-width="1.3" fill="none"/></svg>
<div class="a" style="left:389.5px;top:875px;width:120px;height:13px;background:#1f1f1f;"></div>
<div class="t" style="left:395.5px;top:874.5px;font-size:10px;color:#c8c8c8;">None</div>
<svg class="a" style="left:498px;top:879px;" width="9" height="6" viewBox="0 0 9 6"><path d="M1 1 L4.5 4.5 L8 1" stroke="#b0b0b0" stroke-width="1.3" fill="none"/></svg>
<div class="a" style="left:2px;top:889px;width:527px;height:12px;background:#232323;"></div>
<div class="a" style="left:529px;top:688px;width:1007px;height:213px;background:#232323;"></div>
<div class="a" style="left:528px;top:748px;width:1.5px;height:153px;background:#151515;"></div>
<div class="a" style="left:530px;top:720.5px;width:1006px;height:7px;background:#727272;"></div>
<svg class="a" style="left:529px;top:719.5px;" width="7" height="9" viewBox="0 0 7 9"><path d="M6 0 L6 9 L3 9 Q0 9 0 4.5 Q0 0 3 0 Z" fill="#3e8ad8"/></svg>
<div class="a" style="left:529px;top:727.5px;width:1007px;height:19.5px;background:#1f1f1f;"></div>
<div class="a" style="left:535.5px;top:739px;width:1px;height:7px;background:#8a8a8a;"></div>
<div class="t" style="left:528.5px;top:728.3px;font-size:9.6px;color:#b0b0b0;"><span style="color:#8a8a8a">:</span>00s</div>
<div class="a" style="left:595.0px;top:742.5px;width:1px;height:3px;background:#808080;"></div>
<div class="t" style="left:565.45px;width:60px;text-align:center;top:728.3px;font-size:9.6px;color:#b0b0b0">01s</div>
<div class="a" style="left:654.8px;top:742.5px;width:1px;height:3px;background:#808080;"></div>
<div class="t" style="left:625.3000000000001px;width:60px;text-align:center;top:728.3px;font-size:9.6px;color:#b0b0b0">02s</div>
<div class="a" style="left:714.7px;top:742.5px;width:1px;height:3px;background:#808080;"></div>
<div class="t" style="left:685.1500000000001px;width:60px;text-align:center;top:728.3px;font-size:9.6px;color:#b0b0b0">03s</div>
<div class="a" style="left:774.5px;top:742.5px;width:1px;height:3px;background:#808080;"></div>
<div class="t" style="left:745.0px;width:60px;text-align:center;top:728.3px;font-size:9.6px;color:#b0b0b0">04s</div>
<div class="a" style="left:834.4px;top:742.5px;width:1px;height:3px;background:#808080;"></div>
<div class="t" style="left:804.85px;width:60px;text-align:center;top:728.3px;font-size:9.6px;color:#b0b0b0">05s</div>
<div class="a" style="left:894.2px;top:742.5px;width:1px;height:3px;background:#808080;"></div>
<div class="t" style="left:864.7px;width:60px;text-align:center;top:728.3px;font-size:9.6px;color:#b0b0b0">06s</div>
<div class="a" style="left:954.0px;top:742.5px;width:1px;height:3px;background:#808080;"></div>
<div class="t" style="left:924.55px;width:60px;text-align:center;top:728.3px;font-size:9.6px;color:#b0b0b0">07s</div>
<div class="a" style="left:1013.9px;top:742.5px;width:1px;height:3px;background:#808080;"></div>
<div class="t" style="left:984.4000000000001px;width:60px;text-align:center;top:728.3px;font-size:9.6px;color:#b0b0b0">08s</div>
<div class="a" style="left:1073.8px;top:742.5px;width:1px;height:3px;background:#808080;"></div>
<div class="t" style="left:1044.25px;width:60px;text-align:center;top:728.3px;font-size:9.6px;color:#b0b0b0">09s</div>
<div class="a" style="left:1133.6px;top:742.5px;width:1px;height:3px;background:#808080;"></div>
<div class="t" style="left:1104.1px;width:60px;text-align:center;top:728.3px;font-size:9.6px;color:#b0b0b0">10s</div>
<div class="a" style="left:1193.5px;top:742.5px;width:1px;height:3px;background:#808080;"></div>
<div class="t" style="left:1163.95px;width:60px;text-align:center;top:728.3px;font-size:9.6px;color:#b0b0b0">11s</div>
<div class="a" style="left:1253.3px;top:742.5px;width:1px;height:3px;background:#808080;"></div>
<div class="t" style="left:1223.8000000000002px;width:60px;text-align:center;top:728.3px;font-size:9.6px;color:#b0b0b0">12s</div>
<div class="a" style="left:1313.2px;top:742.5px;width:1px;height:3px;background:#808080;"></div>
<div class="t" style="left:1283.65px;width:60px;text-align:center;top:728.3px;font-size:9.6px;color:#b0b0b0">13s</div>
<div class="a" style="left:1373.0px;top:742.5px;width:1px;height:3px;background:#808080;"></div>
<div class="t" style="left:1343.5px;width:60px;text-align:center;top:728.3px;font-size:9.6px;color:#b0b0b0">14s</div>
<div class="a" style="left:1432.8px;top:742.5px;width:1px;height:3px;background:#808080;"></div>
<div class="t" style="left:1403.35px;width:60px;text-align:center;top:728.3px;font-size:9.6px;color:#b0b0b0">15s</div>
<div class="a" style="left:1492.7px;top:742.5px;width:1px;height:3px;background:#808080;"></div>
<div class="t" style="left:1463.2px;width:60px;text-align:center;top:728.3px;font-size:9.6px;color:#b0b0b0">16s</div>
<div class="a" style="left:1552.6px;top:742.5px;width:1px;height:3px;background:#808080;"></div>
<div class="t" style="left:1523.0500000000002px;width:60px;text-align:center;top:728.3px;font-size:9.6px;color:#b0b0b0">17s</div>
<div class="a" style="left:529px;top:747px;width:1007px;height:13px;background:#656662;"></div>
<svg class="a" style="left:529px;top:747px;" width="7" height="13" viewBox="0 0 7 13"><path d="M6 0 L6 13 L3 13 Q0 13 0 9 L0 4 Q0 0 3 0 Z" fill="#3e8ad8"/></svg>
<div class="a" style="left:529px;top:760px;width:1007px;height:5px;background:#151515;"></div>
<div class="a" style="left:655.5px;top:760.2px;width:881px;height:4.8px;background:#153818;"></div>
<div class="a" style="left:655.5px;top:761.6px;width:881px;height:2px;background:#3c9e48;"></div>
<div class="a" style="left:530px;top:761.5px;width:4px;height:2.5px;background:#2f9a3a;"></div>
<div class="a" style="left:529.5px;top:765.3px;width:1006.5px;height:14.5px;background:linear-gradient(#b3b5cf,#adaed2 30%,#9e9ec6);"></div>
<svg class="a" style="left:529.5px;top:765.3px" width="1006.5" height="14.5"><filter id="nz" x="0" y="0" width="100%" height="100%"><feTurbulence type="fractalNoise" baseFrequency="0.9" numOctaves="2" seed="3"/><feColorMatrix type="matrix" values="0 0 0 0 1  0 0 0 0 1  0 0 0 0 1  0 0 0 1.6 -0.75"/></filter><rect width="1006.5" height="14.5" filter="url(#nz)" opacity="0.22"/></svg>
<div class="a" style="left:529.5px;top:779.2px;width:1006.5px;height:1px;background:#34323f;"></div>
<div class="a" style="left:529.5px;top:780.0px;width:1006.5px;height:15.6px;background:#333333;"></div>
<div class="a" style="left:529.5px;top:794.3px;width:1006.5px;height:1.5px;background:#272727;"></div>
<div class="a" style="left:529.5px;top:795.6px;width:1006.5px;height:15.6px;background:#333333;"></div>
<div class="a" style="left:529.5px;top:809.9px;width:1006.5px;height:1.5px;background:#272727;"></div>
<div class="a" style="left:529.5px;top:811.2px;width:1006.5px;height:15.6px;background:#333333;"></div>
<div class="a" style="left:529.5px;top:825.5px;width:1006.5px;height:1.5px;background:#272727;"></div>
<div class="a" style="left:529.5px;top:826.8px;width:1006.5px;height:15.6px;background:#333333;"></div>
<div class="a" style="left:529.5px;top:841.0999999999999px;width:1006.5px;height:1.5px;background:#272727;"></div>
<div class="a" style="left:529.5px;top:842.4px;width:1006.5px;height:15.6px;background:#333333;"></div>
<div class="a" style="left:529.5px;top:856.6999999999999px;width:1006.5px;height:1.5px;background:#272727;"></div>
<div class="a" style="left:529.5px;top:858.0px;width:1006.5px;height:15.6px;background:#333333;"></div>
<div class="a" style="left:529.5px;top:872.3px;width:1006.5px;height:1.5px;background:#272727;"></div>
<div class="a" style="left:529.5px;top:874px;width:1006.5px;height:15px;background:#383838;"></div>
<div class="a" style="left:535.2px;top:874.3px;width:1000.8px;height:14.2px;background:#82433b;"></div>
<div class="a" style="left:529.5px;top:889px;width:1006.5px;height:12px;background:#333333;"></div>
<div class="a" style="left:528px;top:780px;width:1.5px;height:121px;background:#151515;"></div>
<div class="a" style="left:654.2px;top:720px;width:2.6px;height:181px;background:#6f9cc8;opacity:0.55"></div>
<div class="a" style="left:655.1px;top:727px;width:0.9px;height:174px;background:#6a9ad0;opacity:0.8"></div>
<svg class="a" style="left:532px;top:816px;" width="9" height="9" viewBox="0 0 9 9"><path d="M4.5 0.5 L8.5 4.5 L4.5 8.5 L0.5 4.5 Z" fill="#c8c8c8"/></svg>
<svg class="a" style="left:652px;top:783.0999999999999px;" width="8" height="11" viewBox="0 0 8 11"><path d="M1 1 L7 1 M4 1 L4 10 M1 10 L7 10" stroke="#9fb6c2" stroke-width="1.7" fill="none"/><path d="M4 1 L4 10" stroke="#9fb6c2" stroke-width="2.4"/></svg>
<svg class="a" style="left:652px;top:798.5999999999999px;" width="8" height="11" viewBox="0 0 8 11"><path d="M1 1 L7 1 M4 1 L4 10 M1 10 L7 10" stroke="#9fb6c2" stroke-width="1.7" fill="none"/><path d="M4 1 L4 10" stroke="#9fb6c2" stroke-width="2.4"/></svg>
<svg class="a" style="left:652px;top:830.0999999999999px;" width="8" height="11" viewBox="0 0 8 11"><path d="M1 1 L7 1 M4 1 L4 10 M1 10 L7 10" stroke="#9fb6c2" stroke-width="1.7" fill="none"/><path d="M4 1 L4 10" stroke="#9fb6c2" stroke-width="2.4"/></svg>
<svg class="a" style="left:652px;top:845.5999999999999px;" width="8" height="11" viewBox="0 0 8 11"><path d="M1 1 L7 1 M4 1 L4 10 M1 10 L7 10" stroke="#9fb6c2" stroke-width="1.7" fill="none"/><path d="M4 1 L4 10" stroke="#9fb6c2" stroke-width="2.4"/></svg>
<svg class="a" style="left:652px;top:861.0999999999999px;" width="8" height="11" viewBox="0 0 8 11"><path d="M1 1 L7 1 M4 1 L4 10 M1 10 L7 10" stroke="#9fb6c2" stroke-width="1.7" fill="none"/><path d="M4 1 L4 10" stroke="#9fb6c2" stroke-width="2.4"/></svg>
<svg class="a" style="left:649.5px;top:732px;" width="13" height="15" viewBox="0 0 13 15"><path d="M1.5 3 Q1.5 0.5 4 0.5 L9 0.5 Q11.5 0.5 11.5 3 L11.5 6.5 L6.5 13.5 L1.5 6.5 Z" fill="#3d8ee0"/></svg>
<svg class="a" style="left:651.5px;top:815.5px;" width="9" height="9" viewBox="0 0 9 9"><path d="M4.5 0.8 Q5 0.8 5.5 1.5 L8 4 Q8.5 4.5 8 5 L5.5 7.5 Q4.5 8.5 3.5 7.5 L1 5 Q0.5 4.5 1 4 L3.5 1.5 Q4 0.8 4.5 0.8Z" fill="#3b86d6"/></svg>
<svg class="a" style="left:656.5px;top:827.5px;" width="13" height="19" viewBox="0 0 13 19"><path d="M1 1 L1 15 L4.5 11.5 L7.2 17.5 L9.5 16.5 L7 10.8 L11.8 10.8 Z" fill="#f2f2f2" stroke="#151515" stroke-width="0.9"/></svg>
<svg class="a" style="left:302px;top:668px;" width="14" height="13" viewBox="0 0 14 13"><rect x="0" y="0" width="10" height="8" fill="#b2b2b2"/><path d="M3.5 2 L7 4 L3.5 6Z" fill="#232323"/><rect x="2" y="9" width="12" height="1.3" fill="#8a8a8a"/><rect x="11" y="3" width="1.3" height="7" fill="#8a8a8a"/><rect x="3" y="11.5" width="11" height="1.3" fill="#777"/><rect x="13" y="5" width="1.3" height="7" fill="#777"/></svg>
<svg class="a" style="left:322px;top:668px;" width="13" height="13" viewBox="0 0 13 13"><rect x="0.7" y="0.7" width="11.5" height="8" stroke="#b2b2b2" stroke-width="1.3" fill="none"/><rect x="5.5" y="9" width="2" height="2" fill="#b2b2b2"/><rect x="2.5" y="11" width="8" height="1.4" fill="#b2b2b2"/></svg>
<svg class="a" style="left:341px;top:668px;" width="15" height="13" viewBox="0 0 15 13"><path d="M1 2 Q1 0.5 3 0.5 L12 0.5 Q14 0.5 14 2 L14 7 Q14 9 12 9 L9 9 L7.5 7 L6 9 L3 9 Q1 9 1 7 Z" fill="#b2b2b2"/><circle cx="4.5" cy="4.8" r="2" fill="#232323"/><circle cx="10.5" cy="4.8" r="2" fill="#232323"/><path d="M5 10.5 L10 10.5 L7.5 13Z" fill="#b2b2b2"/></svg>
<div class="a" style="left:359px;top:666px;width:64px;height:18px;background:#202020;"></div>
<div class="t" style="left:365px;top:669.0px;font-size:10px;color:#ababab;">50%</div>
<svg class="a" style="left:409px;top:672px;" width="9" height="6" viewBox="0 0 9 6"><path d="M1 1 L4.5 4.5 L8 1" stroke="#a0a0a0" stroke-width="1.2" fill="none"/></svg>
<svg class="a" style="left:425px;top:667px;" width="14" height="15" viewBox="0 0 14 15"><rect x="0.7" y="0.7" width="12.5" height="9.5" stroke="#b2b2b2" stroke-width="1.3" fill="none"/><path d="M7 2.5 L7 8.5 M4 5.5 L10 5.5" stroke="#b2b2b2" stroke-width="1.2"/><path d="M5 12 L9 12 L7 14.5Z" fill="#b2b2b2"/></svg>
<div class="a" style="left:443px;top:666px;width:18px;height:18px;background:#141c28;"></div>
<svg class="a" style="left:446px;top:668px;" width="14" height="12" viewBox="0 0 14 12"><path d="M1 11 L3.5 2.5 L12.8 1.2 L12.5 11 Z" stroke="#3b64a4" stroke-width="1.1" fill="none"/><circle cx="3.5" cy="2.5" r="0.9" fill="#5a80c0"/><circle cx="12.8" cy="1.2" r="0.9" fill="#5a80c0"/><circle cx="1" cy="11" r="0.9" fill="#5a80c0"/><circle cx="12.5" cy="11" r="0.9" fill="#5a80c0"/></svg>
<div class="a" style="left:464px;top:666px;width:59px;height:18px;background:#202020;"></div>
<div class="t" style="left:471px;top:669.0px;font-size:9.9px;color:#959595;">0:00:02:00</div>
<svg class="a" style="left:529.5px;top:668px;" width="14" height="12" viewBox="0 0 14 12"><path d="M0 3 L4 3 L5.5 0.8 L8.5 0.8 L10 3 L14 3 L14 12 L0 12 Z" fill="#b2b2b2"/><circle cx="7" cy="7" r="2.8" fill="#232323"/><circle cx="7" cy="7" r="1.3" fill="#b2b2b2"/></svg>
<svg class="a" style="left:550px;top:668px;" width="14" height="12" viewBox="0 0 14 12"><circle cx="5" cy="8" r="3.5" stroke="#404040" stroke-width="1.6" fill="none"/><path d="M7.5 5.5 L12 1" stroke="#404040" stroke-width="2"/></svg>
<svg class="a" style="left:571px;top:667px;" width="14" height="15" viewBox="0 0 14 15"><circle cx="7" cy="4" r="3.3" fill="#d04040"/><circle cx="4.5" cy="7.8" r="3.3" fill="#3ca040"/><circle cx="9.5" cy="7.8" r="3.3" fill="#4070d0"/><path d="M5.5 12 L9.5 12 L7.5 14.5Z" fill="#e0e0e0"/></svg>
<div class="a" style="left:587px;top:666px;width:80px;height:18px;background:#202020;"></div>
<div class="t" style="left:594.5px;top:669.0px;font-size:10px;color:#ababab;">Full</div>
<svg class="a" style="left:654px;top:672px;" width="9" height="6" viewBox="0 0 9 6"><path d="M1 1 L4.5 4.5 L8 1" stroke="#a0a0a0" stroke-width="1.2" fill="none"/></svg>
<svg class="a" style="left:670px;top:668px;" width="13" height="13" viewBox="0 0 13 13"><rect x="0.7" y="0.7" width="11.6" height="11.6" stroke="#b2b2b2" stroke-width="1.3" fill="none"/><rect x="3" y="3.5" width="7" height="5.5" fill="#b2b2b2"/></svg>
<svg class="a" style="left:690px;top:668px;" width="13" height="13" viewBox="0 0 13 13"><rect x="0.7" y="0.7" width="11.6" height="11.6" stroke="#b2b2b2" stroke-width="1.3" fill="none"/><path d="M3 3 h2 v2 h-2z M8 3 h2 v2 h-2z M5.5 5.5 h2 v2 h-2z M3 8 h2 v2 h-2z M8 8 h2 v2 h-2z" fill="#b2b2b2"/></svg>
<div class="a" style="left:707px;top:666px;width:98px;height:18px;background:#202020;"></div>
<div class="t" style="left:714.5px;top:669.0px;font-size:10px;color:#ababab;">Active Camera</div>
<svg class="a" style="left:791px;top:672px;" width="9" height="6" viewBox="0 0 9 6"><path d="M1 1 L4.5 4.5 L8 1" stroke="#a0a0a0" stroke-width="1.2" fill="none"/></svg>
<div class="a" style="left:807px;top:666px;width:61px;height:18px;background:#202020;"></div>
<div class="t" style="left:813px;top:669.0px;font-size:10px;color:#ababab;">1 View</div>
<svg class="a" style="left:856px;top:672px;" width="9" height="6" viewBox="0 0 9 6"><path d="M1 1 L4.5 4.5 L8 1" stroke="#a0a0a0" stroke-width="1.2" fill="none"/></svg>
<svg class="a" style="left:872.5px;top:668px;" width="14" height="13" viewBox="0 0 14 13"><path d="M0.7 0 L0.7 5 M13.3 0 L13.3 5 M0.7 2.5 L13.3 2.5" stroke="#b2b2b2" stroke-width="1.2"/><rect x="3" y="6" width="8" height="6.3" stroke="#b2b2b2" stroke-width="1.3" fill="none"/></svg>
<svg class="a" style="left:893px;top:667px;" width="14" height="15" viewBox="0 0 14 15"><rect x="0.7" y="0.7" width="12.6" height="11" stroke="#b2b2b2" stroke-width="1.3" fill="none"/><path d="M8 2.5 L5 6.5 L7.5 6.5 L5.5 10" stroke="#b2b2b2" stroke-width="1.2" fill="none"/><path d="M9.5 11 L13 11 L11.2 13.5Z" fill="#b2b2b2"/></svg>
<svg class="a" style="left:914px;top:668px;" width="13" height="12" viewBox="0 0 13 12"><path d="M0.7 4 L0.7 11.3 L12.3 11.3 L12.3 4 M4 6 L4 11 M6.5 1 L6.5 11 M9 6 L9 11" stroke="#b2b2b2" stroke-width="1.2" fill="none"/><rect x="4.8" y="0" width="3.4" height="3" fill="#b2b2b2"/></svg>
<svg class="a" style="left:933px;top:668px;" width="12" height="12" viewBox="0 0 12 12"><rect x="4" y="0" width="4" height="3.5" fill="#b2b2b2"/><path d="M6 3.5 L6 6 M1.5 6 L10.5 6 M1.5 6 L1.5 8 M10.5 6 L10.5 8" stroke="#b2b2b2" stroke-width="1.1" fill="none"/><rect x="0" y="7.5" width="4" height="4" fill="#b2b2b2"/><rect x="8" y="7.5" width="4" height="4" fill="#b2b2b2"/></svg>
<svg class="a" style="left:955.5px;top:668px;" width="13" height="13" viewBox="0 0 13 13"><circle cx="6.5" cy="6.5" r="5.8" fill="#b2b2b2"/><circle cx="6.5" cy="6.5" r="2.6" fill="#232323"/><path d="M6.5 0.8 L8 4 M12.2 6.5 L9 7.8 M6.5 12.2 L5 9 M0.8 6.5 L4 5.2" stroke="#232323" stroke-width="1.1"/></svg>
<div class="t" style="left:973px;top:669.0px;font-size:10px;color:#2f63a8;">+0.0</div>
<svg class="a" style="left:0;top:0" width="1536" height="901"><g transform="translate(1090,270)">
<defs>
<linearGradient id="neck" gradientUnits="userSpaceOnUse" x1="0" y1="23" x2="0" y2="96">
<stop offset="0" stop-color="#1c6b4b"/><stop offset="0.45" stop-color="#226457"/><stop offset="0.72" stop-color="#465090"/><stop offset="1" stop-color="#7d4d9e"/>
</linearGradient>
<linearGradient id="wing" x1="0" y1="0" x2="0" y2="1"><stop offset="0" stop-color="#a9a9a9"/><stop offset="1" stop-color="#8e8a8a"/></linearGradient>
<filter id="blur3" x="-50%" y="-200%" width="200%" height="500%"><feGaussianBlur stdDeviation="3"/></filter>
</defs>
<ellipse cx="75" cy="155" rx="50" ry="4.5" fill="#2f7e8a" opacity="0.55" filter="url(#blur3)"/><path d="M98.5 96.0 L96.5 50.0 Q96.5 23.5 114.0 23.5 Q132.0 23.5 132.5 42.0 Q132.0 55.0 117.0 61.0 Q119.5 75.0 121.5 96.0 Z" fill="url(#neck)"/><path d="M128.5 39.5 L150.5 37.5 Q146.0 46.0 139.0 49.0 L132.0 50.5 Q129.0 45.0 128.5 39.5 Z" fill="#f27222"/><circle cx="131.5" cy="41.5" r="0.9" fill="#c04a10"/><circle cx="114.5" cy="36.5" r="1.8" fill="#101010"/><circle cx="124.5" cy="34.19999999999999" r="1.8" fill="#101010"/><path d="M98.0 99.5 L123.0 99.5 Q128.0 110.0 127.5 126.0 Q127.0 143.0 113.0 153.0 L36.5 153.0 Q20.0 140.0 20.0 118.0 L20.0 110.0 L43.0 117.5 L98.0 117.5 Z" fill="#6a2e24" stroke="#3c1a14" stroke-width="0.9"/><path d="M20.3 119.0 L20.3 108.0 Q20.5 100.0 23.0 96.0 Q24.0 104.0 27.0 110.0 Q29.0 102.0 32.5 97.5 Q34.0 106.0 36.0 111.0 Q39.0 103.0 43.0 98.0 L43.5 117.5 Q32.0 118.0 20.3 119.0 Z" fill="#2e1f1c"/><path d="M31.0 118.5 L52.0 118.5 L63.0 152.5 L50.0 152.5 Q43.0 148.0 41.0 143.0 L47.0 141.0 Q39.0 137.0 37.0 133.0 L44.0 131.0 Q36.0 126.0 31.0 118.5 Z" fill="#7e4a42" opacity="0.85"/><path d="M52.5 118.2 L97.2 118.2 Q96.0 144.0 76.0 152.6 L63.5 152.6 Z" fill="url(#wing)"/><path d="M53.5 119.0 Q57.0 137.0 63.0 152.5" stroke="#f6f4f0" stroke-width="2.8" fill="none"/><path d="M43.5 117.6 L98.0 117.6" stroke="#3c1c16" stroke-width="1.1"/><path d="M98.0 93.5 Q110.0 96.5 122.2 92.5 L123.2 99.2 Q110.0 103.0 98.5 100.5 Z" fill="#f1ebcf"/><path d="M-413.0 94.4 L86.0 93.2" stroke="#46707c" stroke-width="0.9" opacity="0.9"/><path d="M-413.0 94.6 L86.0 93.4" stroke="#3a5c68" stroke-width="1.6" stroke-dasharray="1.5 8.4" opacity="0.5"/><rect x="-420" y="91.5" width="6.5" height="6.5" fill="none" stroke="#567886" stroke-width="1"/><circle cx="-416.79999999999995" cy="94.69999999999999" r="0.9" fill="#567886"/><circle cx="-333" cy="94.30000000000001" r="1.6" fill="#8ab0c0"/><rect x="6.7" y="9.2" width="6.6" height="6.6" rx="1" fill="#aeaad6" opacity="0.95"/><rect x="6.7" y="89.2" width="6.6" height="6.6" rx="1" fill="#aeaad6" opacity="0.95"/><rect x="6.7" y="169.7" width="6.6" height="6.6" rx="1" fill="#aeaad6" opacity="0.95"/><rect x="83.2" y="9.2" width="6.6" height="6.6" rx="1" fill="#aeaad6" opacity="0.95"/><rect x="83.2" y="169.7" width="6.6" height="6.6" rx="1" fill="#aeaad6" opacity="0.95"/><rect x="160.2" y="9.2" width="6.6" height="6.6" rx="1" fill="#aeaad6" opacity="0.95"/><rect x="160.2" y="89.2" width="6.6" height="6.6" rx="1" fill="#aeaad6" opacity="0.95"/><rect x="160.2" y="169.7" width="6.6" height="6.6" rx="1" fill="#aeaad6" opacity="0.95"/><circle cx="86" cy="92.5" r="4" fill="none" stroke="#c8c4e8" stroke-width="1.4"/><path d="M86.0 85.0 L86.0 100.0 M78.5 92.5 L93.5 92.5" stroke="#c8c4e8" stroke-width="1.2"/></g></svg>
</body></html>
